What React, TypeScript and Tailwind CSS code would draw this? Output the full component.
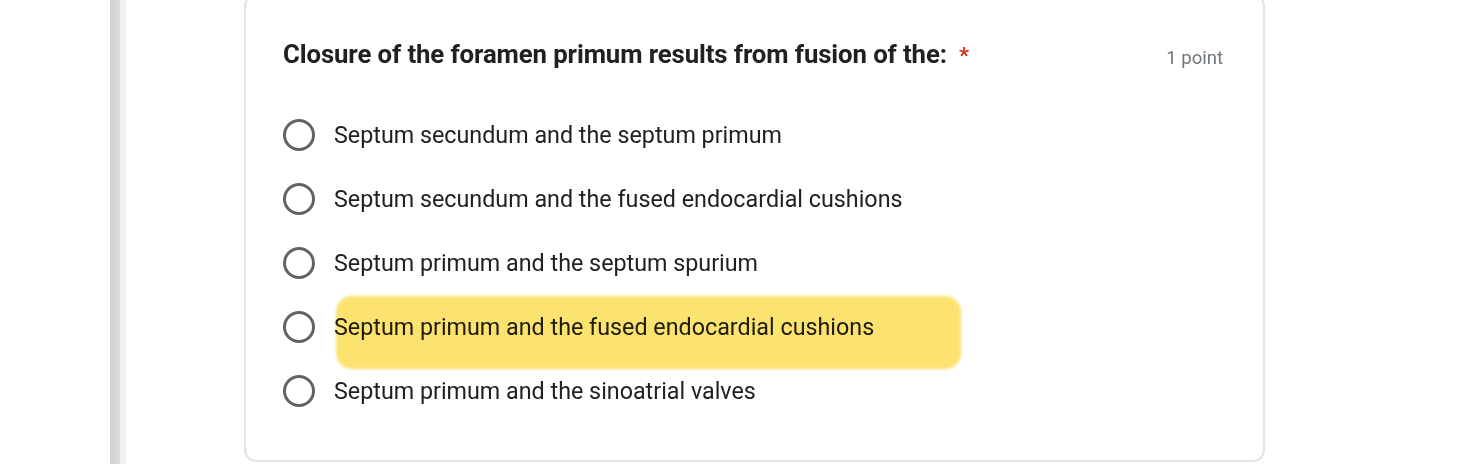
const options = [
  "Septum secundum and the septum primum",
  "Septum secundum and the fused endocardial cushions",
  "Septum primum and the septum spurium",
  "Septum primum and the fused endocardial cushions",
  "Septum primum and the sinoatrial valves",
];

const Radio = () => (
  <span className="block w-[32px] h-[32px] shrink-0 rounded-full border-[3px] border-[#5f6368]" />
);

export default function App() {
  return (
    <div
      className="relative w-[1462px] h-[464px] overflow-hidden bg-white flex"
      style={{ fontFamily: "Roboto, 'Noto Sans', Arial, sans-serif" }}
    >
      <div className="w-[110px] shrink-0" />
      <div className="w-[10px] shrink-0 bg-gradient-to-r from-[#cfcfcf] to-[#dcdcdc]" />
      <div className="w-[6px] shrink-0 bg-[#efefef]" />
      <div className="w-[118px] shrink-0" />

      <div className="w-[1021px] h-[468px] -mt-[6px] rounded-[12px] border-2 border-[#e3e3e3] pl-[37px] pr-[40px] pt-[42px]">
        <div className="flex items-start justify-between">
          <h2 className="text-[25.75px] font-bold text-[#202124] leading-[32px] tracking-[-0.1px]">
            Closure of the foramen primum results from fusion of the:
            <span className="text-[#d93025] text-[22px] ml-[12px]">*</span>
          </h2>
          <span className="text-[18.5px] text-[#70757a] leading-[32px] mt-[4px]">1 point</span>
        </div>

        <div className="relative mt-[45px] flex flex-col gap-[32px]">
          {options.map((o) => (
            <div key={o} className="flex items-center gap-[19px] h-[32px]">
              <Radio />
              <span className="text-[23.3px] text-[#202124] leading-[32px]">{o}</span>
            </div>
          ))}
          <div className="absolute left-[53px] top-[177px] w-[625px] h-[73px] rounded-[16px] bg-[#fcdf5e] mix-blend-multiply blur-[1.5px] opacity-90" />
        </div>
      </div>
    </div>
  );
}
